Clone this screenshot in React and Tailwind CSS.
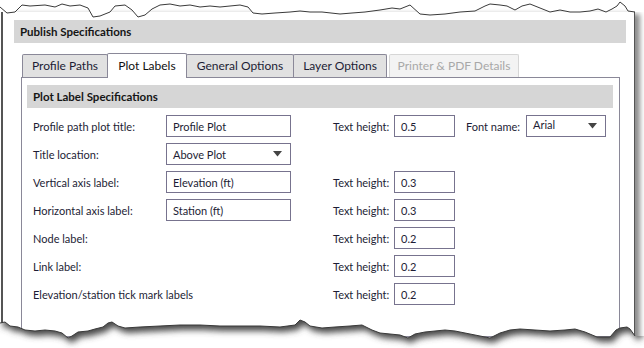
const rows = [
  { label: "Profile path plot title:", kind: "text", value: "Profile Plot", height: "0.5", font: true },
  { label: "Title location:", kind: "select", value: "Above Plot" },
  { label: "Vertical axis label:", kind: "text", value: "Elevation (ft)", height: "0.3" },
  { label: "Horizontal axis label:", kind: "text", value: "Station (ft)", height: "0.3" },
  { label: "Node label:", height: "0.2" },
  { label: "Link label:", height: "0.2" },
  { label: "Elevation/station tick mark labels", height: "0.2" },
];

const topEdge = [
  [0, 7], [7, 13], [15, 12], [22, 5], [30, 6], [45, 5], [55, 7], [62, 4], [70, 6], [80, 5], [88, 8],
  [93, 17], [100, 16], [110, 12], [115, 6], [125, 5], [132, 10], [138, 17], [145, 15], [152, 9],
  [160, 5], [170, 4], [180, 6], [190, 5], [200, 7], [210, 6], [220, 7], [230, 6], [240, 5], [248, 7],
  [253, 13], [262, 14], [275, 13], [290, 12], [300, 11], [310, 12], [322, 12], [340, 14], [352, 13],
  [365, 12], [380, 10], [392, 8], [400, 9], [410, 5], [420, 14], [430, 15], [445, 14], [460, 12],
  [475, 11], [485, 6], [490, 4], [500, 5], [507, 6], [515, 10], [522, 6], [530, 4], [540, 8],
  [550, 12], [560, 10], [570, 12], [580, 12], [590, 11], [598, 9], [606, 12], [612, 9], [617, 6],
  [620, 2], [625, 6], [628, 11], [635, 12],
];

const bottomEdge = [
  [0, 323], [5, 322], [10, 326], [18, 327], [25, 330], [35, 331], [45, 330], [55, 331], [62, 333],
  [68, 338], [72, 336], [78, 332], [88, 331], [95, 329], [103, 327], [108, 323], [112, 322],
  [118, 326], [125, 328], [140, 327], [160, 326], [180, 325], [200, 325], [220, 326], [240, 326],
  [260, 326], [280, 327], [295, 325], [300, 320], [305, 322], [310, 326], [322, 328], [335, 327],
  [350, 326], [362, 325], [372, 330], [380, 333], [390, 334], [400, 335], [408, 338], [415, 334],
  [425, 332], [435, 331], [445, 330], [455, 331], [465, 333], [475, 335], [485, 337], [490, 338],
  [500, 333], [510, 330], [520, 329], [535, 330], [550, 331], [565, 330], [575, 329], [585, 332],
  [597, 337], [610, 337], [616, 330], [620, 328], [627, 327], [630, 329], [635, 336],
];

const pts = (list) => list.map(([x, y]) => `${x},${y}`).join(" ");

function Box({ width, children, arrow }) {
  return (
    <div
      className={`${width} h-[22px] border border-[#77738e] bg-white flex items-center px-[6px] text-[#1d1d35]`}
    >
      <span className="flex-1 whitespace-nowrap">{children}</span>
      {arrow && (
        <svg width="9" height="6" viewBox="0 0 9 6" className="mr-[2px]">
          <path d="M0 0 L9 0 L4.5 5.5 Z" fill="#444" />
        </svg>
      )}
    </div>
  );
}

function Tab({ label, width, active, disabled }) {
  if (active) {
    return (
      <div
        className={`${width} h-[25px] -mb-px -ml-px bg-white border border-b-0 border-[#8a8898] rounded-t-[2px] flex items-center justify-center text-[#111] relative z-10`}
      >
        {label}
      </div>
    );
  }
  return (
    <div
      className={`${width} h-[23px] -ml-px border border-b-0 rounded-t-[2px] flex items-center justify-center ${
        disabled
          ? "ml-[2px] bg-[#f3f3f3] border-[#d6d6d6] text-[#a8a8a8]"
          : "bg-[#e1e1e1] border-[#8a8898] text-[#1d1d35]"
      }`}
    >
      {label}
    </div>
  );
}

export default function App() {
  return (
    <div className="w-[644px] h-[348px] relative overflow-hidden bg-white font-[family-name:'Segoe_UI','Lato',sans-serif] text-[12px] leading-none whitespace-nowrap">
      <div className="pt-[12px] pl-[1px]">
        <div className="w-[634px] h-[340px] bg-white border-l-2 border-r border-[#555] shadow-[5px_2px_5px_rgba(0,0,0,0.45)] pt-[8px] pl-[11px]">
          <div className="w-[612px] h-[23px] bg-[#d6d6d6] flex items-center pl-[6px] font-bold text-[11.5px] text-[#151515]">
            Publish Specifications
          </div>

          <div className="mt-[10px] ml-[7px]">
            <div className="flex items-end pl-[2px]">
              <Tab label="Profile Paths" width="w-[86px]" />
              <Tab label="Plot Labels" width="w-[80px]" active />
              <Tab label="General Options" width="w-[108px]" />
              <Tab label="Layer Options" width="w-[94px]" />
              <Tab label="Printer & PDF Details" width="w-[130px]" disabled />
            </div>

            <div className="w-[599px] h-[260px] border border-[#8a8898] bg-white pt-[7px] pl-[5px]">
              <div className="w-[586px] h-[23px] bg-[#d6d6d6] flex items-center pl-[6px] font-bold text-[11.5px] text-[#151515]">
                Plot Label Specifications
              </div>

              <div className="mt-[7px] pl-[6px] flex flex-col gap-[6px] text-[11px] text-[#1d1d35]">
                {rows.map((r) => (
                  <div key={r.label} className="flex items-center h-[22px]">
                    <div className="w-[133px]">{r.label}</div>
                    {r.kind ? (
                      <Box width="w-[125px]" arrow={r.kind === "select"}>
                        {r.value}
                      </Box>
                    ) : (
                      <div className="w-[125px]" />
                    )}
                    {r.height && (
                      <>
                        <div className="ml-[42px] w-[61px]">Text height:</div>
                        <Box width="w-[61px]">{r.height}</Box>
                        {r.font && (
                          <>
                            <div className="ml-[11px] w-[60px]">Font name:</div>
                            <Box width="w-[80px]" arrow>
                              <span className="relative -top-[2px]">Arial</span>
                            </Box>
                          </>
                        )}
                      </>
                    )}
                  </div>
                ))}
              </div>
            </div>
          </div>
        </div>
      </div>

      <svg className="absolute left-0 top-0" width="644" height="20" viewBox="0 0 644 20">
        <polygon points={`0,0 644,0 644,12 ${pts([...topEdge].reverse())}`} fill="#fff" />
        <polyline points={pts(topEdge)} fill="none" stroke="#3a3a3a" strokeWidth="1" />
      </svg>

      <svg className="absolute left-0 top-0" width="644" height="348" viewBox="0 0 644 348">
        <defs>
          <clipPath id="below">
            <polygon points={`${pts(bottomEdge)} 644,336 644,348 0,348`} />
          </clipPath>
          <filter id="blur" x="-10%" y="-50%" width="120%" height="200%">
            <feGaussianBlur stdDeviation="3" />
          </filter>
        </defs>
        <polygon points={`${pts(bottomEdge)} 644,336 644,348 0,348`} fill="#fff" />
        <g clipPath="url(#below)">
          <polygon
            points={`0,300 ${pts(bottomEdge)} 640,330 640,300`}
            transform="translate(3,5)"
            fill="#4a4a4a"
            filter="url(#blur)"
          />
        </g>
        <polyline points={pts(bottomEdge)} fill="none" stroke="#3a3a3a" strokeWidth="1" />
      </svg>
    </div>
  );
}
